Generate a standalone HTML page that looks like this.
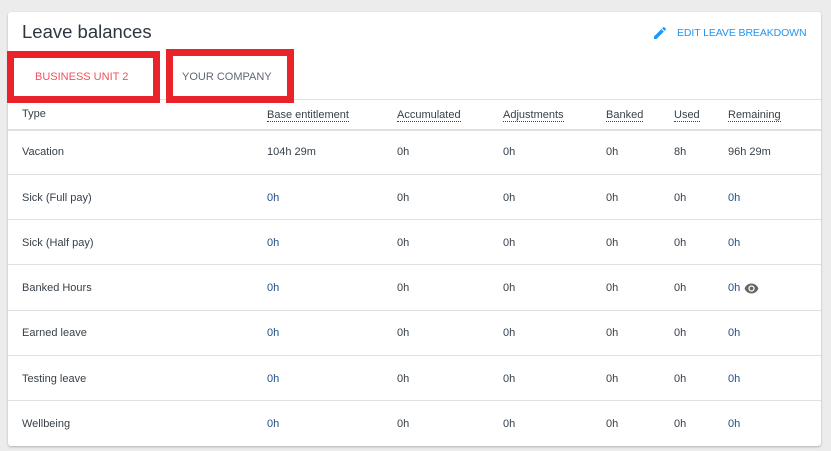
<!DOCTYPE html>
<html><head><style>
body{margin:0;width:831px;height:451px;background:#ececec;font-family:"Liberation Sans",sans-serif;position:relative;overflow:hidden}
.card{position:absolute;left:8px;top:12px;width:813px;height:434px;background:#fff;border-radius:3px;box-shadow:0 1px 2px rgba(0,0,0,.25)}
.t{position:absolute;font-size:11px;color:#37404a;white-space:nowrap;margin-top:1px}
.h{border-bottom:1px dotted #444;line-height:12px}
.line{position:absolute;left:8px;width:813px;height:1px;background:#e0e0e0}
.rb{position:absolute;border:7px solid #e8232a;box-sizing:border-box;z-index:2}
.b{color:#1f4e85}
</style></head><body>
<div class="card"></div>
<div class="t" style="left:22px;top:20px;font-size:18.5px;color:#2d3640">Leave balances</div>
<svg style="position:absolute;left:652px;top:25px" width="16" height="16" viewBox="0 0 24 24"><path fill="#2196f3" d="M3 17.25V21h3.75L17.81 9.94l-3.75-3.75L3 17.25zM20.71 7.04a1 1 0 0 0 0-1.41l-2.34-2.34a1 1 0 0 0-1.41 0l-1.83 1.83 3.75 3.75 1.83-1.83z"/></svg>
<div class="t" style="left:677px;top:26px;color:#2196f3;font-size:10.5px;letter-spacing:-0.1px">EDIT LEAVE BREAKDOWN</div>
<div class="line" style="top:99px"></div>
<div class="line" style="top:129px;height:2px"></div>
<div class="line" style="top:174px"></div><div class="line" style="top:219px"></div><div class="line" style="top:264px"></div><div class="line" style="top:310px"></div><div class="line" style="top:355px"></div><div class="line" style="top:400px"></div>
<div class="rb" style="left:7px;top:51px;width:153px;height:52px"></div>
<div class="rb" style="left:166px;top:49px;width:128px;height:54px"></div>
<div class="t" style="left:35px;top:70px;color:#f0525a">BUSINESS UNIT 2</div>
<div class="t" style="left:182px;top:70px;color:#606870">YOUR COMPANY</div>
<div class="t" style="left:22px;top:107px">Type</div>
<div class="t h" style="left:267px;top:108px">Base entitlement</div>
<div class="t h" style="left:397px;top:108px">Accumulated</div>
<div class="t h" style="left:503px;top:108px">Adjustments</div>
<div class="t h" style="left:606px;top:108px">Banked</div>
<div class="t h" style="left:674px;top:108px">Used</div>
<div class="t h" style="left:728px;top:108px">Remaining</div>

<div class="t" style="left:22px;top:145px">Vacation</div><div class="t" style="left:267px;top:145px">104h 29m</div><div class="t" style="left:397px;top:145px">0h</div><div class="t" style="left:503px;top:145px">0h</div><div class="t" style="left:606px;top:145px">0h</div><div class="t" style="left:674px;top:145px">8h</div><div class="t" style="left:728px;top:145px">96h 29m</div>

<div class="t" style="left:22px;top:191px">Sick (Full pay)</div><div class="t b" style="left:267px;top:191px">0h</div><div class="t" style="left:397px;top:191px">0h</div><div class="t" style="left:503px;top:191px">0h</div><div class="t" style="left:606px;top:191px">0h</div><div class="t" style="left:674px;top:191px">0h</div><div class="t b" style="left:728px;top:191px">0h</div>

<div class="t" style="left:22px;top:236px">Sick (Half pay)</div><div class="t b" style="left:267px;top:236px">0h</div><div class="t" style="left:397px;top:236px">0h</div><div class="t" style="left:503px;top:236px">0h</div><div class="t" style="left:606px;top:236px">0h</div><div class="t" style="left:674px;top:236px">0h</div><div class="t b" style="left:728px;top:236px">0h</div>

<div class="t" style="left:22px;top:281px">Banked Hours</div><div class="t b" style="left:267px;top:281px">0h</div><div class="t" style="left:397px;top:281px">0h</div><div class="t" style="left:503px;top:281px">0h</div><div class="t" style="left:606px;top:281px">0h</div><div class="t" style="left:674px;top:281px">0h</div><div class="t b" style="left:728px;top:281px">0h</div>
<svg style="position:absolute;left:744px;top:282px" width="15" height="13" viewBox="0 0 24 20"><path fill="#666" d="M12 2C7 2 2.7 5.1 1 10c1.7 4.9 6 8 11 8s9.3-3.1 11-8c-1.7-4.9-6-8-11-8zm0 13a5 5 0 1 1 0-10 5 5 0 0 1 0 10zm0-8a3 3 0 1 0 0 6 3 3 0 0 0 0-6z"/></svg>

<div class="t" style="left:22px;top:326px">Earned leave</div><div class="t b" style="left:267px;top:326px">0h</div><div class="t" style="left:397px;top:326px">0h</div><div class="t" style="left:503px;top:326px">0h</div><div class="t" style="left:606px;top:326px">0h</div><div class="t" style="left:674px;top:326px">0h</div><div class="t b" style="left:728px;top:326px">0h</div>

<div class="t" style="left:22px;top:372px">Testing leave</div><div class="t b" style="left:267px;top:372px">0h</div><div class="t" style="left:397px;top:372px">0h</div><div class="t" style="left:503px;top:372px">0h</div><div class="t" style="left:606px;top:372px">0h</div><div class="t" style="left:674px;top:372px">0h</div><div class="t b" style="left:728px;top:372px">0h</div>

<div class="t" style="left:22px;top:417px">Wellbeing</div><div class="t b" style="left:267px;top:417px">0h</div><div class="t" style="left:397px;top:417px">0h</div><div class="t" style="left:503px;top:417px">0h</div><div class="t" style="left:606px;top:417px">0h</div><div class="t" style="left:674px;top:417px">0h</div><div class="t b" style="left:728px;top:417px">0h</div>
</body></html>
